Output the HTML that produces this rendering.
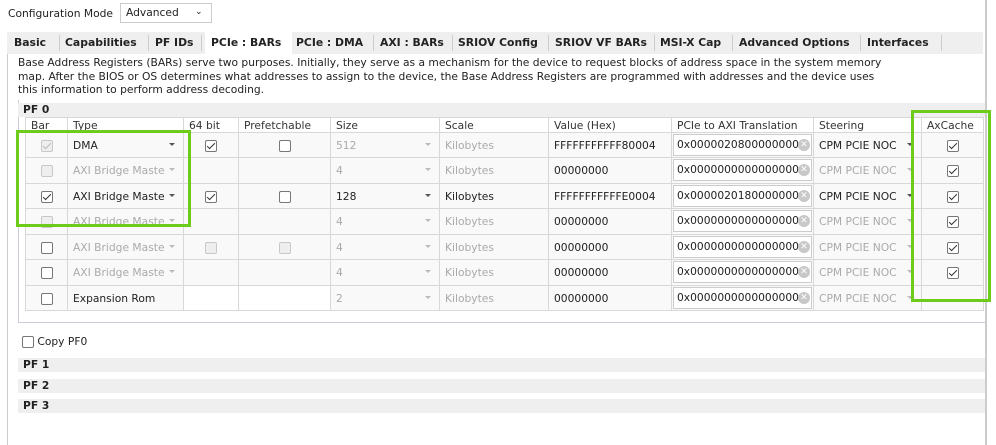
<!DOCTYPE html>
<html><head><meta charset="utf-8"><style>
*{box-sizing:border-box;margin:0;padding:0}
body{width:996px;height:445px;background:#fff;font-family:"DejaVu Sans","Liberation Sans",sans-serif;font-size:10.7px;color:#222;position:relative;overflow:hidden}
.a{position:absolute}
.tabs{left:7px;top:32px;width:976px;height:22px;background:#efefef}
.tab{position:absolute;top:0;height:22px;line-height:21px;font-weight:bold;font-size:10.8px;color:#222}
.sep{position:absolute;top:3px;width:1px;height:16px;background:#ccc}
table{position:absolute;left:25px;top:117px;border-collapse:collapse;table-layout:fixed;background:#f9f9f9}
td{border:1px solid #d8d8d8;padding:0 0 0 5px;white-space:nowrap;overflow:hidden;position:relative;font-size:10.7px}
tr.h td{height:15px;background:#fff;color:#333}
.g{color:#aaa}
.cb{display:inline-block;width:12px;height:12px;border:1px solid #777;border-radius:2px;background:#fff;vertical-align:middle;position:relative}
.cb.d{border-color:#c8c8c8;background:#eee}
.cb.k::after{content:"";position:absolute;left:3px;top:0px;width:3px;height:7px;border:solid #333;border-width:0 1.6px 1.6px 0;transform:rotate(45deg)}
.cb.d.k::after{border-color:#bbb}
.c{text-align:center;padding:0}
.arr{position:absolute;right:8px;top:10px;width:0;height:0;border-left:3px solid transparent;border-right:3px solid transparent;border-top:3px solid #555}
.arr.g2{border-top-color:#bbb}
.inp{position:absolute;left:1px;top:1px;width:139px;height:22px;border:1px solid #ccc;background:#fff;line-height:20px;padding-left:3px;font-size:10.7px}
.x{position:absolute;right:1px;top:4px;width:12px;height:12px;border-radius:6px;background:#c8c8c8;color:#fff;font-size:9px;line-height:12px;text-align:center}
.pf{left:18px;width:967px;height:14px;background:#efefef;font-weight:bold;font-size:10.7px;line-height:14px;padding-left:5px}
.grn{border:3px solid #6dcc1a}
</style></head><body>
<div class="a" style="left:8px;top:7px">Configuration Mode</div>
<div class="a" style="left:120px;top:3px;width:92px;height:20px;border:1px solid #ccc;padding-left:5px;line-height:18px">Advanced<span style="position:absolute;left:74px;top:-1px;font-size:9px">&#8964;</span></div>
<div class="a" style="left:7px;top:54px;width:1px;height:391px;background:#ccc"></div>
<div class="a" style="left:985px;top:0;width:2px;height:445px;background:#ccc"></div>
<div class="a tabs">
<div class="a" style="left:198px;top:0;width:87px;height:22px;background:#fff"></div>
<span class="tab" style="left:7px">Basic</span><div class="sep" style="left:52px"></div>
<span class="tab" style="left:58px">Capabilities</span><div class="sep" style="left:141px"></div>
<span class="tab" style="left:148px">PF IDs</span><div class="sep" style="left:194px"></div>
<span class="tab" style="left:204px">PCIe : BARs</span>
<span class="tab" style="left:289px">PCIe : DMA</span><div class="sep" style="left:366px"></div>
<span class="tab" style="left:373px">AXI : BARs</span><div class="sep" style="left:445px"></div>
<span class="tab" style="left:451px">SRIOV Config</span><div class="sep" style="left:541px"></div>
<span class="tab" style="left:548px">SRIOV VF BARs</span><div class="sep" style="left:647px"></div>
<span class="tab" style="left:653px">MSI-X Cap</span><div class="sep" style="left:725px"></div>
<span class="tab" style="left:732px">Advanced Options</span><div class="sep" style="left:853px"></div>
<span class="tab" style="left:860px">Interfaces</span><div class="sep" style="left:934px"></div>
</div>
<div class="a" style="left:18px;top:56px;line-height:13.5px;font-size:10.7px;width:920px">Base Address Registers (BARs) serve two purposes. Initially, they serve as a mechanism for the device to request blocks of address space in the system memory<br>map. After the BIOS or OS determines what addresses to assign to the device, the Base Address Registers are programmed with addresses and the device uses<br>this information to perform address decoding.</div>
<div class="a" style="left:18px;top:100px;width:967px;height:223px;border:1px solid #ccd;border-top:none;border-right:none"></div>
<div class="a pf" style="top:103px">PF 0</div>
<table>
<colgroup><col style="width:42px"><col style="width:116px"><col style="width:55px"><col style="width:92px"><col style="width:109px"><col style="width:109px"><col style="width:123px"><col style="width:142px"><col style="width:108px"><col style="width:62px"></colgroup>
<tr class="h"><td>Bar</td><td>Type</td><td>64 bit</td><td>Prefetchable</td><td>Size</td><td>Scale</td><td>Value (Hex)</td><td>PCIe to AXI Translation</td><td>Steering</td><td>AxCache</td></tr>
<tr style="height:25px"><td class="c"><span class="cb d k"></span></td><td>DMA<i class="arr"></i></td><td class="c"><span class="cb k"></span></td><td class="c"><span class="cb"></span></td><td class="g">512<i class="arr g2"></i></td><td class="g">Kilobytes</td><td>FFFFFFFFFFF80004</td><td><div class="inp">0x0000020800000000<span class="x">✕</span></div></td><td>CPM PCIE NOC<i class="arr"></i></td><td class="c"><span class="cb k"></span></td></tr>
<tr style="height:26px"><td class="c"><span class="cb d"></span></td><td class="g">AXI Bridge Maste<i class="arr g2"></i></td><td></td><td></td><td class="g">4<i class="arr g2"></i></td><td class="g">Kilobytes</td><td>00000000</td><td><div class="inp">0x0000000000000000<span class="x">✕</span></div></td><td class="g">CPM PCIE NOC<i class="arr g2"></i></td><td class="c"><span class="cb k"></span></td></tr>
<tr style="height:25px"><td class="c"><span class="cb k"></span></td><td>AXI Bridge Maste<i class="arr"></i></td><td class="c"><span class="cb k"></span></td><td class="c"><span class="cb"></span></td><td>128<i class="arr"></i></td><td>Kilobytes</td><td>FFFFFFFFFFFE0004</td><td><div class="inp">0x0000020180000000<span class="x">✕</span></div></td><td>CPM PCIE NOC<i class="arr"></i></td><td class="c"><span class="cb k"></span></td></tr>
<tr style="height:26px"><td class="c"><span class="cb d"></span></td><td class="g">AXI Bridge Maste<i class="arr g2"></i></td><td></td><td></td><td class="g">4<i class="arr g2"></i></td><td class="g">Kilobytes</td><td>00000000</td><td><div class="inp">0x0000000000000000<span class="x">✕</span></div></td><td class="g">CPM PCIE NOC<i class="arr g2"></i></td><td class="c"><span class="cb k"></span></td></tr>
<tr style="height:25px"><td class="c"><span class="cb"></span></td><td class="g">AXI Bridge Maste<i class="arr g2"></i></td><td class="c"><span class="cb d"></span></td><td class="c"><span class="cb d"></span></td><td class="g">4<i class="arr g2"></i></td><td class="g">Kilobytes</td><td>00000000</td><td><div class="inp">0x0000000000000000<span class="x">✕</span></div></td><td class="g">CPM PCIE NOC<i class="arr g2"></i></td><td class="c"><span class="cb k"></span></td></tr>
<tr style="height:26px"><td class="c"><span class="cb"></span></td><td class="g">AXI Bridge Maste<i class="arr g2"></i></td><td></td><td></td><td class="g">4<i class="arr g2"></i></td><td class="g">Kilobytes</td><td>00000000</td><td><div class="inp">0x0000000000000000<span class="x">✕</span></div></td><td class="g">CPM PCIE NOC<i class="arr g2"></i></td><td class="c"><span class="cb k"></span></td></tr>
<tr style="height:25px"><td class="c"><span class="cb"></span></td><td>Expansion Rom</td><td style="background:#fff"></td><td style="background:#fff"></td><td class="g">2<i class="arr g2"></i></td><td class="g">Kilobytes</td><td>00000000</td><td><div class="inp">0x0000000000000000<span class="x">✕</span></div></td><td class="g">CPM PCIE NOC<i class="arr g2"></i></td><td></td></tr>
</table>
<div class="a grn" style="left:16px;top:130px;width:175px;height:97px"></div>
<div class="a grn" style="left:911px;top:110px;width:80px;height:192px"></div>
<div class="a" style="left:22px;top:335px"><span class="cb"></span> Copy PF0</div>
<div class="a pf" style="top:358px">PF 1</div>
<div class="a pf" style="top:379px">PF 2</div>
<div class="a pf" style="top:399px">PF 3</div>
</body></html>
